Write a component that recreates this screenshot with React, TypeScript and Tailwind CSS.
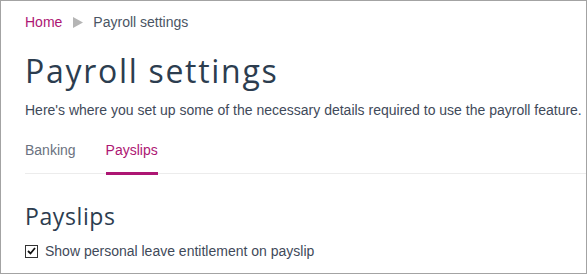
import { useState } from 'react'

const tabs = ['Banking', 'Payslips']

export default function App() {
  const [activeTab, setActiveTab] = useState('Payslips')
  const [showLeave, setShowLeave] = useState(true)

  return (
    <div className="w-[587px] h-[274px] overflow-hidden bg-white border border-[#a3a3a3] font-['Liberation_Sans',Arial,sans-serif] text-[14px]">
      <div className="pl-6 pt-[12px]">
        {/* Breadcrumb */}
        <nav className="flex items-center h-[18px] leading-[18px]">
          <a href="#" className="text-[#ad1673]">
            Home
          </a>
          <svg width="10" height="11" viewBox="0 0 10 11" className="ml-[11px] mr-[10px]">
            <polygon points="0,0 10,5.5 0,11" fill="#b5b5b5" />
          </svg>
          <span className="text-[#4a5564]">Payroll settings</span>
        </nav>

        <h1 className="mt-[22px] font-['Open_Sans',sans-serif] text-[32px] leading-[36px] text-[#2c3d4f] tracking-[1.7px]">
          Payroll settings
        </h1>
        <p className="mt-[12px] leading-[18px] text-[#3f4a5a]">
          Here's where you set up some of the necessary details required to use the payroll feature.
        </p>

        {/* Tabs */}
        <div className="mt-[22px] flex gap-[30px] border-b border-[#ececec]">
          {tabs.map((tab) => (
            <button
              key={tab}
              onClick={() => setActiveTab(tab)}
              className={`pb-[13px] leading-[18px] border-b-[3px] -mb-[2px] ${
                activeTab === tab ? 'text-[#ad1673] border-[#ad1673]' : 'text-[#6b7280] border-transparent'
              }`}
            >
              {tab}
            </button>
          ))}
        </div>

        <h2 className="mt-[28px] font-['Open_Sans',sans-serif] text-[23px] leading-[28px] text-[#2c3d4f] tracking-[0.6px]">
          Payslips
        </h2>
        <label className="mt-[12px] flex items-center gap-[7px] text-[#3f4a5a] leading-[18px] cursor-pointer">
          <input
            type="checkbox"
            checked={showLeave}
            onChange={(e) => setShowLeave(e.target.checked)}
            className="sr-only"
          />
          <span className="w-[13px] h-[13px] border border-[#333] bg-white flex items-center justify-center">
            {showLeave && (
              <svg width="9" height="8" viewBox="0 0 9 8">
                <path d="M1 4 L3.5 6.5 L8 1" fill="none" stroke="#111" strokeWidth="1.8" />
              </svg>
            )}
          </span>
          Show personal leave entitlement on payslip
        </label>
      </div>
    </div>
  )
}
